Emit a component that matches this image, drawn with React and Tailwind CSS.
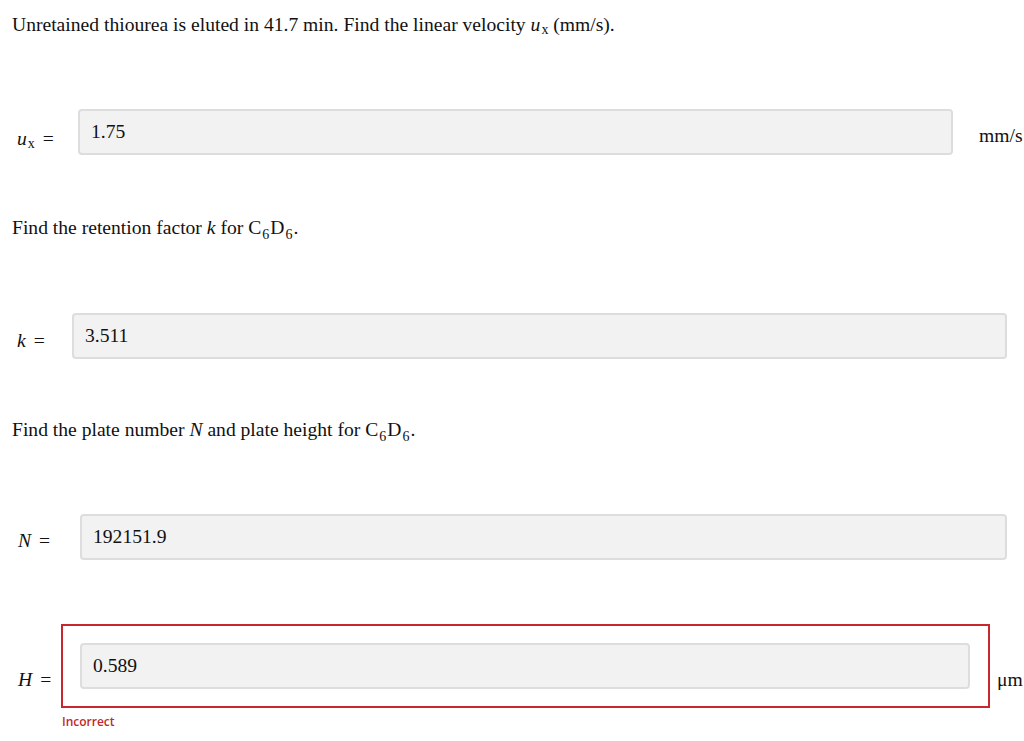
import React from "react";

const serif = { fontFamily: '"Liberation Serif", "Times New Roman", serif' };

function Box({ value, className = "" }) {
  return (
    <div
      className={`flex-1 h-[46px] flex items-center rounded-[4px] border-2 border-[#dddddd] bg-[#f2f2f2] pl-[11px] text-[19.6px] text-[#111] ${className}`}
    >
      {value}
    </div>
  );
}

function Sub({ children }) {
  return (
    <span className="inline-block text-[14px] leading-none relative top-[5px] mx-[1px]">{children}</span>
  );
}

function X() {
  return <span className="text-[14px] leading-none relative top-[3px] ml-[1px]">x</span>;
}

export default function App() {
  return (
    <div className="min-h-screen bg-white text-[#111] text-[19.6px]" style={serif}>
      <p className="pt-3 pl-3 h-[38px] leading-[26px]">
        Unretained thiourea is eluted in 41.7 min. Find the linear velocity{" "}
        <i>u</i>
        <X /> (mm/s).
      </p>

      {/* u_x */}
      <div className="mt-[71px] flex items-center">
        <div className="w-[78px] pl-[17px] pt-[14px] leading-[26px]">
          <i>u</i>
          <X />
          <span className="ml-[8px]">=</span>
        </div>
        <Box value="1.75" />
        <div className="w-[71px] pl-[26px] pt-[8px] leading-[26px]">mm/s</div>
      </div>

      <p className="mt-[60px] pl-3 h-[26px] leading-[26px]">
        Find the retention factor <i>k</i> for C<Sub>6</Sub>D<Sub>6</Sub>.
      </p>

      {/* k */}
      <div className="mt-[72px] flex items-center pr-[17px]">
        <div className="w-[72px] pl-[17px] pt-[9px] leading-[26px]">
          <i>k</i>
          <span className="ml-[8px]">=</span>
        </div>
        <Box value="3.511" />
      </div>

      <p className="mt-[58px] pl-3 h-[26px] leading-[26px]">
        Find the plate number <i>N</i> and plate height for C<Sub>6</Sub>D<Sub>6</Sub>.
      </p>

      {/* N */}
      <div className="mt-[71px] flex items-center pr-[17px]">
        <div className="w-[80px] pl-[18px] pt-[7px] leading-[26px]">
          <i>N</i>
          <span className="ml-[8px]">=</span>
        </div>
        <Box value="192151.9" />
      </div>

      {/* H */}
      <div className="mt-[64px] flex items-center">
        <div className="w-[61px] pl-[18px] pt-[6px] leading-[26px]">
          <i>H</i>
          <span className="ml-[8px]">=</span>
        </div>
        <div className="flex-1 flex flex-col">
          <div className="h-[84px] border-2 border-[#c8282d] flex items-center pl-[17px] pr-[18px]">
            <Box value="0.589" />
          </div>
          <div
            className="mt-[7px] pl-[1px] text-[12px] leading-[14px] font-semibold text-[#c1272d]"
            style={{ fontFamily: '"Open Sans", "Noto Sans", sans-serif' }}
          >
            Incorrect
          </div>
        </div>
        <div className="w-[34px] pl-[7px] pt-[6px] leading-[26px]">μm</div>
      </div>
    </div>
  );
}
